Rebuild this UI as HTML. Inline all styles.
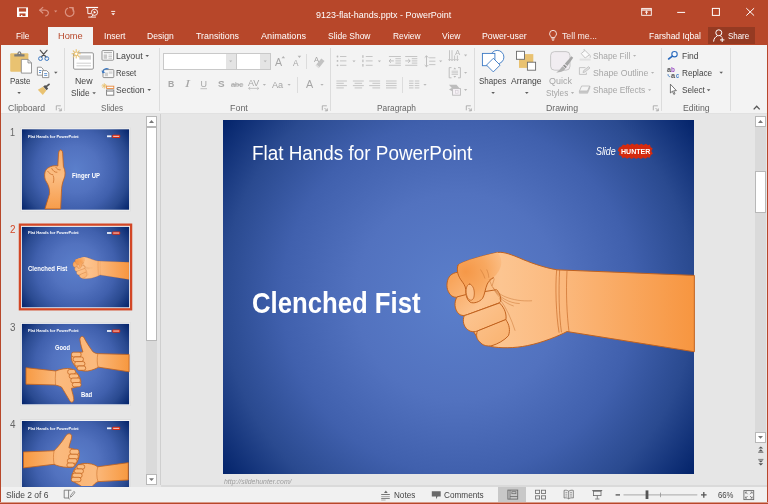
<!DOCTYPE html>
<html lang="en">
<head>
<meta charset="utf-8">
<title>9123-flat-hands.pptx - PowerPoint</title>
<style>
html,body{margin:0;padding:0;}
body{width:768px;height:504px;overflow:hidden;background:#e6e6e6;font-family:"Liberation Sans",Arial,sans-serif;}
#win{position:relative;width:768px;height:504px;overflow:hidden;background:#e6e6e6;}
#win div,#win svg{position:absolute;}
.t{position:absolute;white-space:pre;transform-origin:0 50%;}
#titlebar{left:0;top:0;width:768px;height:45px;background:#b7472a;}
#hometab{left:48px;top:27px;width:45px;height:19px;background:#f3f3f3;}
#share{left:708px;top:27px;width:47px;height:17px;background:#953a22;}
#ribbon{left:1px;top:45px;width:766px;height:68px;background:#f3f3f3;}
#ribline{left:1px;top:113px;width:766px;height:1px;background:#e1e1e1;}
.gsep{width:1px;top:48px;height:63px;background:#dcdcdc;}
.ssep{width:1px;background:#dcdcdc;}
#bl{left:0;top:45px;width:1px;height:459px;background:#b7472a;}
#br{left:767px;top:45px;width:1px;height:459px;background:#b7472a;}
#bb{left:0;top:503px;width:768px;height:1px;background:#b7472a;}#bb2{left:0;top:502px;width:768px;height:1px;background:#d89a89;}
#status{left:1px;top:487px;width:766px;height:16px;background:#f1f1f1;}
#statline{left:161px;top:485px;width:606px;height:2px;background:#dadada;}
#lpdiv{left:160px;top:114px;width:1px;height:371px;background:#cfcfcf;}
.sbbtn{background:#fff;border:1px solid #b8b8b8;box-sizing:border-box;}
.sbtrack{background:#dadada;}
.sbthumb{background:#fff;border:1px solid #b8b8b8;box-sizing:border-box;}
.box{background:#fff;border:1px solid #c9c9c9;box-sizing:border-box;}
.boxbtn{background:#e4e4e4;}
#slide{left:223px;top:120px;width:471px;height:354px;background:radial-gradient(circle farthest-corner at 50% 50%,#5b7fcb 0%,#5272bf 35%,#4060ad 60%,#2a4a90 80%,#03236a 100%);}
.thumb{left:21px;width:109px;height:82px;background:radial-gradient(ellipse 72% 72% at 50% 50%,#5b7eca 0%,#5476c2 20%,#4464b1 50%,#2c4a97 75%,#06266a 100%);outline:1px solid #d0d0d0;}
#viewsel{left:498px;top:487px;width:28px;height:16px;background:#c8c8c8;}
</style>
</head>
<body>
<div id="win">
<div id="titlebar"></div>
<div id="hometab"></div>
<div id="share"></div>
<div id="ribbon"></div>
<div id="ribline"></div>
<div class="gsep" style="left:64px"></div>
<div class="gsep" style="left:159px"></div>
<div class="gsep" style="left:330px"></div>
<div class="gsep" style="left:474px"></div>
<div class="gsep" style="left:661px"></div>
<div class="gsep" style="left:730px"></div>
<div class="ssep" style="left:306px;top:54px;height:15px"></div>
<div class="ssep" style="left:297px;top:77px;height:16px"></div>
<div class="ssep" style="left:402px;top:77px;height:16px"></div>
<div class="box" style="left:163px;top:53px;width:74px;height:17px"></div>
<div class="boxbtn" style="left:226px;top:54px;width:10px;height:15px"></div>
<div class="box" style="left:236px;top:53px;width:35px;height:17px"></div>
<div class="boxbtn" style="left:260px;top:54px;width:10px;height:15px"></div>
<!-- left panel -->
<div id="lpdiv"></div>
<div class="sbtrack" style="left:146px;top:116px;width:11px;height:369px"></div>
<div class="sbbtn" style="left:146px;top:116px;width:11px;height:11px"></div>
<div class="sbthumb" style="left:146px;top:127px;width:11px;height:214px"></div>
<div class="sbbtn" style="left:146px;top:474px;width:11px;height:11px"></div>
<!-- right scrollbar -->
<div class="sbtrack" style="left:755px;top:116px;width:11px;height:326px"></div>
<div class="sbbtn" style="left:755px;top:116px;width:11px;height:11px"></div>
<div class="sbthumb" style="left:755px;top:171px;width:11px;height:42px"></div>
<div class="sbbtn" style="left:755px;top:432px;width:11px;height:11px"></div>
<!-- slide -->
<div id="slide"></div>
<svg width="768" height="504" viewBox="0 0 768 504" style="left:0;top:0">
<defs>
<linearGradient id="skinA" gradientUnits="userSpaceOnUse" x1="90" y1="0" x2="1290" y2="0">
<stop offset="0" stop-color="#f9ae6a"/><stop offset="0.18" stop-color="#fcc591"/><stop offset="0.45" stop-color="#fbb87c"/><stop offset="1" stop-color="#f7953f"/>
</linearGradient>
<linearGradient id="skinF" gradientUnits="userSpaceOnUse" x1="60" y1="150" x2="330" y2="420">
<stop offset="0" stop-color="#f8a55c"/><stop offset="0.5" stop-color="#fcc38e"/><stop offset="1" stop-color="#fab676"/>
</linearGradient>
<radialGradient id="skinT" gradientUnits="userSpaceOnUse" cx="130" cy="110" r="210">
<stop offset="0" stop-color="#f59848"/><stop offset="0.5" stop-color="#f8a860" /><stop offset="1" stop-color="#fcc28c"/>
</radialGradient>
</defs>
<g transform="translate(440 250) scale(0.1984)" stroke="#c0611d" stroke-width="5" stroke-linejoin="round" stroke-linecap="round" fill="none">
<!-- palm + forearm -->
<path fill="url(#skinA)" d="M92,75 C115,58 190,35 290,12 C325,8 370,28 400,40 C450,62 520,88 590,100 L1282,128 L1282,513 L640,411 C600,432 520,466 440,482 C380,495 300,496 255,486 L190,445 L120,330 L85,238 L90,115 Z"/>
<!-- wrist creases -->
<path stroke-width="3" d="M588,102 C580,180 585,330 600,415 M603,103 C597,200 600,330 612,413 M640,108 C634,220 640,330 650,410"/>
<!-- index finger -->
<path fill="url(#skinF)" d="M95,112 C70,112 45,125 38,155 C30,185 38,215 60,232 C75,242 100,240 130,228 L200,200 L180,110 Z"/>
<!-- middle finger -->
<path fill="url(#skinF)" d="M85,238 C70,262 72,300 95,322 C108,333 125,332 140,325 L300,266 C315,250 300,215 285,200 L130,225 Z"/>
<!-- ring finger -->
<path fill="url(#skinF)" d="M122,332 C112,355 118,385 140,402 C155,414 175,414 190,408 L332,352 C336,330 330,295 300,267 L140,325 Z"/>
<!-- pinky -->
<path fill="url(#skinF)" d="M188,410 C180,430 185,450 200,463 C215,482 240,487 262,482 C290,474 325,455 345,432 C355,405 350,375 332,352 Z"/>
<!-- thumb -->
<path fill="url(#skinT)" d="M92,75 C82,95 88,125 105,150 C118,168 128,180 130,200 C128,225 135,250 152,263 C170,272 200,262 215,243 C225,225 228,195 238,172 C245,158 255,148 268,140 C300,110 330,60 290,12 C190,35 115,58 92,75 Z" stroke="none"/>
<path d="M92,75 C82,95 88,125 105,150 C118,168 128,180 130,200 C128,225 135,250 152,263 C170,272 200,262 215,243 C225,225 228,195 238,172 C245,158 255,148 268,140"/>
<!-- nail -->
<path fill="#fbc08a" stroke-width="4" d="M150,172 C168,176 176,205 172,232 C170,248 160,256 150,252 C136,245 130,220 132,198 C134,182 140,172 150,172 Z"/>
<!-- creases -->
<path stroke-width="2.5" stroke="#c87433" d="M268,140 L248,150 L262,182 L272,150 Z"/>
<path stroke-width="2.5" stroke="#c87433" d="M262,182 C285,225 360,262 462,256 M268,190 C295,240 350,268 400,270 M275,205 C300,245 330,268 370,282 M300,245 C335,290 360,350 378,405 M205,100 C215,115 222,128 226,142 M236,100 C242,112 245,125 246,138"/>
</g>
<path fill="#d42a0f" d="M619,147.5 L621.5,146.5 L623,144.5 L625.5,145.3 L627.5,143.8 L630,145 L632,143.6 L634.5,144.8 L637,143.7 L639,145 L641.5,143.8 L643.5,145 L646,143.8 L648,145.3 L650,144.6 L650.5,147 L652.7,148.5 L651.3,151 L652.8,153.5 L650.6,155.5 L650,157.8 L647.5,157.2 L645.5,158.8 L643,157.6 L641,159 L638.5,157.8 L636,159 L634,157.6 L631.5,158.9 L629.5,157.5 L627,158.8 L625,157.3 L622.5,158.3 L621.3,156 L618.6,155 L619.6,152.5 L617.8,150.5 Z"/>
</svg>

<svg width="768" height="504" viewBox="0 0 768 504" style="left:0;top:0">
<defs>
<linearGradient id="skinV" gradientUnits="userSpaceOnUse" x1="0" y1="130" x2="0" y2="500">
<stop offset="0" stop-color="#f9b06c"/><stop offset="0.45" stop-color="#fbbd82"/><stop offset="1" stop-color="#f79b49"/>
</linearGradient>
<linearGradient id="skinL" gradientUnits="userSpaceOnUse" x1="20" y1="0" x2="370" y2="0">
<stop offset="0" stop-color="#f7983f"/><stop offset="0.6" stop-color="#fbba7e"/><stop offset="1" stop-color="#fbb575"/>
</linearGradient>
<linearGradient id="skinR" gradientUnits="userSpaceOnUse" x1="310" y1="0" x2="660" y2="0">
<stop offset="0" stop-color="#fbb575"/><stop offset="0.4" stop-color="#fbba7e"/><stop offset="1" stop-color="#f7983f"/>
</linearGradient>
<radialGradient id="tbg0" gradientUnits="userSpaceOnUse" cx="75.5" cy="169.5" r="67"><stop offset="0" stop-color="#5b7fcb"/><stop offset="0.35" stop-color="#5272bf"/><stop offset="0.6" stop-color="#4060ad"/><stop offset="0.8" stop-color="#2a4a90"/><stop offset="1" stop-color="#03236a"/></radialGradient>
<radialGradient id="tbg1" gradientUnits="userSpaceOnUse" cx="75.5" cy="267.1" r="67"><stop offset="0" stop-color="#5b7fcb"/><stop offset="0.35" stop-color="#5272bf"/><stop offset="0.6" stop-color="#4060ad"/><stop offset="0.8" stop-color="#2a4a90"/><stop offset="1" stop-color="#03236a"/></radialGradient>
<radialGradient id="tbg2" gradientUnits="userSpaceOnUse" cx="75.5" cy="364.1" r="67"><stop offset="0" stop-color="#5b7fcb"/><stop offset="0.35" stop-color="#5272bf"/><stop offset="0.6" stop-color="#4060ad"/><stop offset="0.8" stop-color="#2a4a90"/><stop offset="1" stop-color="#03236a"/></radialGradient>
<radialGradient id="tbg3" gradientUnits="userSpaceOnUse" cx="75.5" cy="461.2" r="67"><stop offset="0" stop-color="#5b7fcb"/><stop offset="0.35" stop-color="#5272bf"/><stop offset="0.6" stop-color="#4060ad"/><stop offset="0.8" stop-color="#2a4a90"/><stop offset="1" stop-color="#03236a"/></radialGradient>

<clipPath id="c2"><rect x="21.9" y="226.9" width="107.2" height="80.4"/></clipPath>
<clipPath id="c4"><rect x="0" y="0" width="672" height="411"/></clipPath>
</defs>
<rect x="20.3" y="127.7" width="110.4" height="83.6" fill="#dadada"/><rect x="20.9" y="128.3" width="109.2" height="82.4" fill="#f4f4f4"/><rect x="21.9" y="129.3" width="107.2" height="80.4" fill="url(#tbg0)"/>
<rect x="19.9" y="224.65" width="111.2" height="84.65" fill="#f4f4f4" stroke="#d24726" stroke-width="2.3"/>
<rect x="21.9" y="226.9" width="107.2" height="80.4" fill="url(#tbg1)"/>
<rect x="20.3" y="322.3" width="110.4" height="83.6" fill="#dadada"/><rect x="20.9" y="322.9" width="109.2" height="82.4" fill="#f4f4f4"/><rect x="21.9" y="323.9" width="107.2" height="80.4" fill="url(#tbg2)"/>
<rect x="20.3" y="419.4" width="110.4" height="83.6" fill="#dadada"/><rect x="20.9" y="420.0" width="109.2" height="82.4" fill="#f4f4f4"/><rect x="21.9" y="421.0" width="107.2" height="80.4" fill="url(#tbg3)"/>
<!-- thumb1 finger up -->
<g transform="translate(20.2 127.7) scale(0.165)" stroke="#c0611d" stroke-width="5" stroke-linejoin="round">
<path fill="url(#skinV)" d="M150,492 L178,400 C180,370 170,345 160,330 C145,310 145,275 155,258 C165,240 200,225 228,232 L232,160 C233,140 240,133 247,135 C256,138 258,150 258,165 L262,235 C275,260 275,290 265,310 C255,335 250,360 250,390 L245,492 Z"/>
<path fill="none" stroke-width="4" d="M165,262 C175,275 185,285 200,285 M190,245 C198,262 210,272 225,270 M215,238 C222,250 232,258 245,255 M200,290 C205,305 205,320 200,335"/>
</g>
<rect x="112.2" y="134.70000000000002" width="8" height="3.4" rx="1" fill="#d62b10"/><rect x="107" y="135.4" width="4.4" height="1.8" fill="#fff" opacity="0.9"/><rect x="113.2" y="135.8" width="6" height="1.1" fill="#fff" opacity="0.75"/>
<!-- thumb2 fist -->
<g clip-path="url(#c2)"><g transform="translate(-28.75 199.61) scale(0.2274)"><g transform="translate(440 250) scale(0.1984)" stroke="#c0611d" stroke-width="5" stroke-linejoin="round" stroke-linecap="round" fill="none">
<!-- palm + forearm -->
<path fill="url(#skinA)" d="M92,75 C115,58 190,35 290,12 C325,8 370,28 400,40 C450,62 520,88 590,100 L1282,128 L1282,513 L640,411 C600,432 520,466 440,482 C380,495 300,496 255,486 L190,445 L120,330 L85,238 L90,115 Z"/>
<!-- wrist creases -->
<path stroke-width="3" d="M588,102 C580,180 585,330 600,415 M603,103 C597,200 600,330 612,413 M640,108 C634,220 640,330 650,410"/>
<!-- index finger -->
<path fill="url(#skinF)" d="M95,112 C70,112 45,125 38,155 C30,185 38,215 60,232 C75,242 100,240 130,228 L200,200 L180,110 Z"/>
<!-- middle finger -->
<path fill="url(#skinF)" d="M85,238 C70,262 72,300 95,322 C108,333 125,332 140,325 L300,266 C315,250 300,215 285,200 L130,225 Z"/>
<!-- ring finger -->
<path fill="url(#skinF)" d="M122,332 C112,355 118,385 140,402 C155,414 175,414 190,408 L332,352 C336,330 330,295 300,267 L140,325 Z"/>
<!-- pinky -->
<path fill="url(#skinF)" d="M188,410 C180,430 185,450 200,463 C215,482 240,487 262,482 C290,474 325,455 345,432 C355,405 350,375 332,352 Z"/>
<!-- thumb -->
<path fill="url(#skinT)" d="M92,75 C82,95 88,125 105,150 C118,168 128,180 130,200 C128,225 135,250 152,263 C170,272 200,262 215,243 C225,225 228,195 238,172 C245,158 255,148 268,140 C300,110 330,60 290,12 C190,35 115,58 92,75 Z" stroke="none"/>
<path d="M92,75 C82,95 88,125 105,150 C118,168 128,180 130,200 C128,225 135,250 152,263 C170,272 200,262 215,243 C225,225 228,195 238,172 C245,158 255,148 268,140"/>
<!-- nail -->
<path fill="#fbc08a" stroke-width="4" d="M150,172 C168,176 176,205 172,232 C170,248 160,256 150,252 C136,245 130,220 132,198 C134,182 140,172 150,172 Z"/>
<!-- creases -->
<path stroke-width="2.5" stroke="#c87433" d="M268,140 L248,150 L262,182 L272,150 Z"/>
<path stroke-width="2.5" stroke="#c87433" d="M262,182 C285,225 360,262 462,256 M268,190 C295,240 350,268 400,270 M275,205 C300,245 330,268 370,282 M300,245 C335,290 360,350 378,405 M205,100 C215,115 222,128 226,142 M236,100 C242,112 245,125 246,138"/>
</g></g></g>
<rect x="112.2" y="231.4" width="8" height="3.4" rx="1" fill="#d62b10"/><rect x="107" y="232.1" width="4.4" height="1.8" fill="#fff" opacity="0.9"/><rect x="113.2" y="232.5" width="6" height="1.1" fill="#fff" opacity="0.75"/>
<!-- thumb3 -->
<g transform="translate(20.2 322.3) scale(0.165)" stroke="#c0611d" stroke-width="5" stroke-linejoin="round">
<path fill="url(#skinR)" d="M660,195 L475,190 C460,190 450,185 440,178 C420,150 400,120 385,90 C375,80 362,88 362,105 C365,135 375,160 380,180 C350,182 320,190 312,205 C305,225 320,250 335,270 C350,290 380,298 410,295 C440,290 460,280 475,272 L660,300 Z"/>
<rect x="311" y="181" width="58" height="29" rx="12" fill="#fbbd82" stroke-width="4.5"/><rect x="321" y="210" width="62" height="28" rx="12" fill="#fbbd82" stroke-width="4.5"/><rect x="330" y="238" width="62" height="27" rx="12" fill="#fbbd82" stroke-width="4.5"/><rect x="345" y="265" width="52" height="26" rx="12" fill="#fbbd82" stroke-width="4.5"/><path fill="none" stroke-width="3" d="M470,192 C465,220 466,250 472,272"/>
<path fill="url(#skinL)" d="M35,275 L215,295 C240,285 280,275 310,282 C340,295 365,330 368,360 C365,385 340,395 310,400 C315,425 325,450 325,470 C322,488 308,488 300,475 C285,450 265,415 250,392 C235,385 222,382 212,380 L35,375 Z"/>
<rect x="288" y="286" width="47" height="29" rx="12" fill="#fbbd82" stroke-width="4.5"/><rect x="297" y="313" width="57" height="27" rx="12" fill="#fbbd82" stroke-width="4.5"/><rect x="307" y="338" width="57" height="29" rx="12" fill="#fbbd82" stroke-width="4.5"/><rect x="316" y="365" width="53" height="26" rx="12" fill="#fbbd82" stroke-width="4.5"/><path fill="none" stroke-width="3" d="M215,296 C212,325 212,355 214,380"/>
</g>
<rect x="112.2" y="329.4" width="8" height="3.4" rx="1" fill="#d62b10"/><rect x="107" y="330.1" width="4.4" height="1.8" fill="#fff" opacity="0.9"/><rect x="113.2" y="330.5" width="6" height="1.1" fill="#fff" opacity="0.75"/>
<!-- thumb4 -->
<g transform="translate(20.2 418.1) scale(0.165)" stroke="#c0611d" stroke-width="5" stroke-linejoin="round" clip-path="url(#c4)">
<path fill="url(#skinL)" d="M20,205 L205,198 C220,185 250,150 275,110 C285,92 305,90 312,105 C315,125 300,150 295,180 C320,185 350,195 358,215 C360,240 345,270 330,290 C310,302 270,300 240,292 C225,288 212,284 205,280 L20,302 Z"/>
<rect x="302" y="189" width="54" height="31" rx="12" fill="#fbbd82" stroke-width="4.5"/><rect x="294" y="219" width="58" height="29" rx="12" fill="#fbbd82" stroke-width="4.5"/><rect x="286" y="246" width="58" height="28" rx="12" fill="#fbbd82" stroke-width="4.5"/><rect x="283" y="272" width="46" height="25" rx="12" fill="#fbbd82" stroke-width="4.5"/><path fill="none" stroke-width="3" d="M205,200 C200,225 200,255 206,280"/>
<path fill="url(#skinR)" d="M655,270 L470,295 C450,280 420,272 380,275 C350,280 330,300 320,330 C305,355 310,380 340,395 C360,405 375,412 380,425 L430,425 C445,400 460,390 472,385 L655,375 Z"/>
<rect x="344" y="282" width="47" height="27" rx="12" fill="#fbbd82" stroke-width="4.5"/><rect x="329" y="308" width="54" height="27" rx="12" fill="#fbbd82" stroke-width="4.5"/><rect x="317" y="334" width="58" height="27" rx="12" fill="#fbbd82" stroke-width="4.5"/><rect x="310" y="359" width="58" height="27" rx="12" fill="#fbbd82" stroke-width="4.5"/><path fill="none" stroke-width="3" d="M470,296 C462,325 462,360 472,385"/>
</g>
<rect x="112.2" y="426.7" width="8" height="3.4" rx="1" fill="#d62b10"/><rect x="107" y="427.40000000000003" width="4.4" height="1.8" fill="#fff" opacity="0.9"/><rect x="113.2" y="427.8" width="6" height="1.1" fill="#fff" opacity="0.75"/>
</svg>
<div id="statline"></div>
<div id="status"></div>
<div id="viewsel"></div>
<div id="bl"></div><div id="br"></div><div id="bb2"></div><div id="bb"></div>
<svg width="768" height="504" viewBox="0 0 768 504" style="left:0;top:0">
<rect x="17" y="7" width="11" height="10" fill="#fff"/>
<rect x="17" y="7" width="11" height="0.7" fill="#b7472a" opacity="0.55"/>
<rect x="18.9" y="8.2" width="7.2" height="3.4" fill="#b7472a"/>
<rect x="19.5" y="13.4" width="6" height="2.7" fill="#b7472a"/>
<rect x="21" y="14.9" width="1.4" height="1.3" fill="#fff"/>
<path d="M39.8,10.2 H45 C48,10.2 49,12.5 48,14.2 C47.4,15.3 46.5,15.8 45.5,16" stroke="#dc9482" stroke-width="1.2" fill="none" stroke-linecap="round"/>
<path d="M42.8,7.4 L39.8,10.2 L42.8,13" stroke="#dc9482" stroke-width="1.2" fill="none" stroke-linecap="round" stroke-linejoin="round"/>
<path d="M54.10,10.60 h3.2 l-1.60,1.8 z" fill="#dc9482"/>
<path d="M72.2,8.6 A4.3,4.3 0 1 1 67.6,8.3" stroke="#dc9482" stroke-width="1.2" fill="none" stroke-linecap="round"/>
<path d="M69.6,7.6 H73.2 V11.2" stroke="#dc9482" stroke-width="1.2" fill="none" stroke-linecap="round" stroke-linejoin="round"/>
<path d="M85.9,7.5 H98.1" stroke="#fff" stroke-width="1.2"/>
<path d="M87.8,7.5 V13.6 H91" stroke="#fff" stroke-width="0.9" fill="none"/>
<circle cx="94.5" cy="12.3" r="3.1" stroke="#fff" stroke-width="0.9" fill="none"/>
<path d="M93.6,10.8 L96.2,12.3 L93.6,13.8 Z" fill="#fff"/>
<path d="M93,15 L91.3,17.1 M88.2,17.1 H96" stroke="#fff" stroke-width="0.9" fill="none"/>
<path d="M111.2,11.4 H115.2" stroke="#fff" stroke-width="0.9"/>
<path d="M111.30,13.25 h3.8 l-1.90,2.1 z" fill="#fff"/>
<path d="M551.3,37.6 C551.2,36.2 549.6,35.6 549.6,33.8 A3.45,3.45 0 0 1 556.5,33.8 C556.5,35.6 554.9,36.2 554.8,37.6 Z" stroke="#fff" stroke-width="0.9" fill="none" opacity="0.92"/>
<path d="M551.5,38.9 H554.6 M552,40.1 H554.1" stroke="#fff" stroke-width="0.9" opacity="0.92"/>
<circle cx="718.8" cy="32.8" r="3" stroke="#fff" stroke-width="1" fill="none"/>
<path d="M713.6,41.6 C713.8,38.5 715.6,36.6 717.3,36 M720.3,36 C721.2,36.4 721.8,36.9 722.3,37.5" stroke="#fff" stroke-width="1" fill="none"/>
<path d="M720,39.9 H724.4 M722.2,37.8 V42" stroke="#fff" stroke-width="1" fill="none"/>
<rect x="641.7" y="8.4" width="9.6" height="6.9" stroke="#fff" stroke-width="0.9" fill="none"/>
<path d="M641.7,10 H651.3" stroke="#fff" stroke-width="1.2"/>
<path d="M646.5,11.2 V14.4 M644.9,12.7 L646.5,11.2 L648.1,12.7" stroke="#fff" stroke-width="0.9" fill="none"/>
<path d="M677.2,12.4 H685.1" stroke="#fff" stroke-width="1"/>
<rect x="712.4" y="8.4" width="7" height="7" stroke="#fff" stroke-width="1" fill="none"/>
<path d="M746.3,8.2 L754.1,15.6 M754.1,8.2 L746.3,15.6" stroke="#fff" stroke-width="1" fill="none"/>
<rect x="10.2" y="53.3" width="18.2" height="18.5" rx="1" fill="#e9c271"/>
<path d="M14.3,56.6 V54.2 H17.3 C17.3,52.6 18.2,51.2 19.4,51.2 C20.6,51.2 21.5,52.6 21.5,54.2 H24.5 V56.6 Z" fill="#7b7b7b"/>
<circle cx="19.4" cy="53.3" r="0.8" fill="#f3f3f3"/>
<path d="M21.3,59.4 H28 L31.5,62.9 V73.1 H21.3 Z" fill="#fff" stroke="#8c8c8c" stroke-width="0.9"/>
<path d="M28,59.4 V62.9 H31.5" fill="none" stroke="#8c8c8c" stroke-width="0.9"/>
<path d="M17.30,92.10 h3.6 l-1.80,2.0 z" fill="#5e5e5e"/>
<path d="M40.3,50.3 L46,57 M47,50.3 L41.3,57" stroke="#555" stroke-width="1.2" fill="none" stroke-linecap="round"/>
<circle cx="40.5" cy="58.6" r="1.9" stroke="#3a78c3" stroke-width="1" fill="none"/>
<circle cx="46.8" cy="58.6" r="1.9" stroke="#3a78c3" stroke-width="1" fill="none"/>
<path d="M37.4,67.2 H41.2 L43.2,69.2 V75.2 H37.4 Z" fill="#fff" stroke="#7d7d7d" stroke-width="0.8"/>
<path d="M42.5,70.6 H46.6 L48.8,72.8 V77.6 H42.5 Z" fill="#fff" stroke="#7d7d7d" stroke-width="0.8"/>
<path d="M39,70.5 H41.5 M39,72.5 H41 M44.2,73.6 H47.2 M44.2,75.4 H47.2" stroke="#3a78c3" stroke-width="0.8"/>
<path d="M54.00,71.80 h3.6 l-1.80,2.0 z" fill="#5e5e5e"/>
<path d="M37.8,89.7 L43,86.8 L46.3,90.6 L42.8,94.9 Z" fill="#e9c271"/>
<path d="M43.2,86.4 L45.2,85 L48.2,88.4 L46.6,90.3 Z" fill="#555"/>
<path d="M46.5,86.4 L49,84.4" stroke="#555" stroke-width="1.8" stroke-linecap="round"/>
<path d="M56.3,110.3 V105.8 H60.8" stroke="#a0a0a0" stroke-width="0.8" fill="none"/>
<path d="M58.5,108.0 L61.3,110.8 M61.3,108.39999999999999 V110.8 H58.9" stroke="#a0a0a0" stroke-width="0.8" fill="none"/>
<rect x="73.6" y="52.8" width="19.8" height="16.4" rx="1.2" fill="#fff" stroke="#8a8a8a" stroke-width="0.9"/>
<rect x="79.3" y="55.4" width="11.7" height="4.2" fill="#d0d0d0"/>
<path d="M76.5,63.2 H91 M76.5,65.8 H91" stroke="#c4c4c4" stroke-width="0.8"/>
<g stroke="#e9c271" stroke-width="1.1" stroke-linecap="round"><path d="M76.2,49.6 V58 M72,53.8 H80.4 M73.2,50.8 L79.2,56.8 M79.2,50.8 L73.2,56.8"/></g>
<circle cx="76.2" cy="53.8" r="1.7" fill="#fff" stroke="#e9c271" stroke-width="0.9"/>
<path d="M92.30,92.30 h3.6 l-1.80,2.0 z" fill="#5e5e5e"/>
<rect x="102" y="50.6" width="11.6" height="9.6" rx="0.8" fill="#fff" stroke="#858585" stroke-width="0.9"/>
<path d="M103.8,52.7 H112" stroke="#9a9a9a" stroke-width="0.9"/>
<rect x="103.6" y="54.4" width="3.6" height="4.4" fill="#c9c9c9"/>
<path d="M108.4,55 H112 M108.4,56.6 H112 M108.4,58.2 H112" stroke="#aaa" stroke-width="0.7"/>
<path d="M145.40,54.90 h3.6 l-1.80,2.0 z" fill="#5e5e5e"/>
<rect x="103" y="69.6" width="10.8" height="8" rx="0.8" fill="#f7f7f7" stroke="#858585" stroke-width="0.9"/>
<rect x="104.8" y="72.6" width="3.2" height="3.6" fill="#cfcfcf"/><rect x="108.8" y="71.4" width="3.6" height="2.4" fill="#d6d6d6"/>
<path d="M102.8,72.3 C103,69.6 105.5,68 108.6,69" stroke="#3a78c3" stroke-width="1.2" fill="none"/>
<path d="M101.4,70.6 L102.7,73.4 L105.4,72.2 Z" fill="#3a78c3"/>
<g stroke="#e9c271" stroke-width="0.9" stroke-linecap="round"><path d="M104.3,83.6 V88.2 M102,85.9 H106.6 M102.7,84.3 L105.9,87.5 M105.9,84.3 L102.7,87.5"/></g>
<rect x="106.6" y="86.2" width="7.2" height="2.2" fill="#fff" stroke="#e8873a" stroke-width="0.9"/>
<rect x="106.6" y="90" width="7.2" height="5.2" fill="#fff" stroke="#777" stroke-width="0.9"/>
<path d="M106.6,91.4 H113.8" stroke="#999" stroke-width="0.8"/>
<path d="M147.40,89.10 h3.6 l-1.80,2.0 z" fill="#5e5e5e"/>
<path d="M229.10,60.50 h3.2 l-1.60,1.8 z" fill="#b8b8b8"/>
<path d="M263.60,60.50 h3.2 l-1.60,1.8 z" fill="#b8b8b8"/>
<path d="M281.5,58.2 L283.3,55.9 L285.1,58.2 Z" fill="#b3b3b3"/>
<path d="M297.6,55.8 H301.2 L299.4,58.1 Z" fill="#b3b3b3"/>
<path d="M316.3,64.6 L321.3,58.4 L324.5,61 L319.5,67.2 Z" fill="#c2c2c2"/>
<path d="M316.3,64.6 L319.5,67.2 L318.6,68.2 L315.4,65.6 Z" fill="#dcdcdc"/>
<path d="M200.50,88.70 H207.00" stroke="#b3b3b3" stroke-width="0.8" fill="none"/>
<path d="M231.00,84.90 H243.30" stroke="#a6a6a6" stroke-width="0.9" fill="none"/>
<path d="M248.6,88.4 H258.8 M250.2,87 L248.6,88.4 L250.2,89.8 M257.2,87 L258.8,88.4 L257.2,89.8" stroke="#b3b3b3" stroke-width="0.7" fill="none"/>
<path d="M262.80,83.90 h3.2 l-1.60,1.8 z" fill="#b3b3b3"/>
<path d="M287.50,83.90 h3.2 l-1.60,1.8 z" fill="#b3b3b3"/>
<path d="M320.40,83.90 h3.2 l-1.60,1.8 z" fill="#b3b3b3"/>
<path d="M322.3,110.3 V105.8 H326.8" stroke="#a0a0a0" stroke-width="0.8" fill="none"/>
<path d="M324.5,108.0 L327.3,110.8 M327.3,108.39999999999999 V110.8 H324.90000000000003" stroke="#a0a0a0" stroke-width="0.8" fill="none"/>
<circle cx="337.5" cy="56.5" r="0.9" fill="#b9b9b9"/>
<path d="M340.00,56.50 H346.40" stroke="#b9b9b9" stroke-width="0.8" fill="none"/>
<rect x="362.3" y="55.2" width="1.2" height="2.6" fill="#b9b9b9"/>
<path d="M365.80,56.50 H372.60" stroke="#b9b9b9" stroke-width="0.8" fill="none"/>
<circle cx="337.5" cy="60.9" r="0.9" fill="#b9b9b9"/>
<path d="M340.00,60.90 H346.40" stroke="#b9b9b9" stroke-width="0.8" fill="none"/>
<rect x="362.3" y="59.6" width="1.2" height="2.6" fill="#b9b9b9"/>
<path d="M365.80,60.90 H372.60" stroke="#b9b9b9" stroke-width="0.8" fill="none"/>
<circle cx="337.5" cy="65.3" r="0.9" fill="#b9b9b9"/>
<path d="M340.00,65.30 H346.40" stroke="#b9b9b9" stroke-width="0.8" fill="none"/>
<rect x="362.3" y="64.0" width="1.2" height="2.6" fill="#b9b9b9"/>
<path d="M365.80,65.30 H372.60" stroke="#b9b9b9" stroke-width="0.8" fill="none"/>
<path d="M352.40,60.40 h3.2 l-1.60,1.8 z" fill="#b9b9b9"/>
<path d="M377.80,60.40 h3.2 l-1.60,1.8 z" fill="#b9b9b9"/>
<path d="M388.90,56.50 H400.90" stroke="#b9b9b9" stroke-width="0.8" fill="none"/>
<path d="M388.90,65.30 H400.90" stroke="#b9b9b9" stroke-width="0.8" fill="none"/>
<path d="M395.40,58.70 H400.90" stroke="#b9b9b9" stroke-width="0.8" fill="none"/>
<path d="M395.40,60.90 H400.90" stroke="#b9b9b9" stroke-width="0.8" fill="none"/>
<path d="M395.40,63.10 H400.90" stroke="#b9b9b9" stroke-width="0.8" fill="none"/>
<path d="M389,60.9 H393.8 M391,59 L389,60.9 L391,62.8" stroke="#b9b9b9" stroke-width="0.9" fill="none"/>
<path d="M405.20,56.50 H417.30" stroke="#b9b9b9" stroke-width="0.8" fill="none"/>
<path d="M405.20,65.30 H417.30" stroke="#b9b9b9" stroke-width="0.8" fill="none"/>
<path d="M411.80,58.70 H417.30" stroke="#b9b9b9" stroke-width="0.8" fill="none"/>
<path d="M411.80,60.90 H417.30" stroke="#b9b9b9" stroke-width="0.8" fill="none"/>
<path d="M411.80,63.10 H417.30" stroke="#b9b9b9" stroke-width="0.8" fill="none"/>
<path d="M405.3,60.9 H410.2 M408.2,59 L410.2,60.9 L408.2,62.8" stroke="#b9b9b9" stroke-width="0.9" fill="none"/>
<path d="M426.5,55.8 V66.8 M424.7,57.6 L426.5,55.8 L428.3,57.6 M424.7,65 L426.5,66.8 L428.3,65" stroke="#b9b9b9" stroke-width="0.9" fill="none"/>
<path d="M429.20,57.80 H435.40" stroke="#b9b9b9" stroke-width="0.8" fill="none"/>
<path d="M429.20,61.20 H435.40" stroke="#b9b9b9" stroke-width="0.8" fill="none"/>
<path d="M429.20,64.60 H435.40" stroke="#b9b9b9" stroke-width="0.8" fill="none"/>
<path d="M439.10,60.40 h3.2 l-1.60,1.8 z" fill="#b9b9b9"/>
<path d="M336.40,81.00 H346.90" stroke="#b9b9b9" stroke-width="0.8" fill="none"/>
<path d="M352.90,81.00 H363.80" stroke="#b9b9b9" stroke-width="0.8" fill="none"/>
<path d="M369.20,81.00 H380.10" stroke="#b9b9b9" stroke-width="0.8" fill="none"/>
<path d="M386.00,81.00 H396.60" stroke="#b9b9b9" stroke-width="0.8" fill="none"/>
<path d="M336.40,83.30 H343.80" stroke="#b9b9b9" stroke-width="0.8" fill="none"/>
<path d="M354.60,83.30 H362.10" stroke="#b9b9b9" stroke-width="0.8" fill="none"/>
<path d="M372.40,83.30 H380.10" stroke="#b9b9b9" stroke-width="0.8" fill="none"/>
<path d="M386.00,83.30 H396.60" stroke="#b9b9b9" stroke-width="0.8" fill="none"/>
<path d="M336.40,85.60 H346.90" stroke="#b9b9b9" stroke-width="0.8" fill="none"/>
<path d="M352.90,85.60 H363.80" stroke="#b9b9b9" stroke-width="0.8" fill="none"/>
<path d="M369.20,85.60 H380.10" stroke="#b9b9b9" stroke-width="0.8" fill="none"/>
<path d="M386.00,85.60 H396.60" stroke="#b9b9b9" stroke-width="0.8" fill="none"/>
<path d="M336.40,87.90 H343.80" stroke="#b9b9b9" stroke-width="0.8" fill="none"/>
<path d="M354.60,87.90 H362.10" stroke="#b9b9b9" stroke-width="0.8" fill="none"/>
<path d="M372.40,87.90 H380.10" stroke="#b9b9b9" stroke-width="0.8" fill="none"/>
<path d="M386.00,87.90 H396.60" stroke="#b9b9b9" stroke-width="0.8" fill="none"/>
<path d="M409.00,81.00 H413.50" stroke="#b9b9b9" stroke-width="0.8" fill="none"/>
<path d="M414.80,81.00 H419.30" stroke="#b9b9b9" stroke-width="0.8" fill="none"/>
<path d="M409.00,83.30 H413.50" stroke="#b9b9b9" stroke-width="0.8" fill="none"/>
<path d="M414.80,83.30 H419.30" stroke="#b9b9b9" stroke-width="0.8" fill="none"/>
<path d="M409.00,85.60 H413.50" stroke="#b9b9b9" stroke-width="0.8" fill="none"/>
<path d="M414.80,85.60 H419.30" stroke="#b9b9b9" stroke-width="0.8" fill="none"/>
<path d="M409.00,87.90 H413.50" stroke="#b9b9b9" stroke-width="0.8" fill="none"/>
<path d="M414.80,87.90 H419.30" stroke="#b9b9b9" stroke-width="0.8" fill="none"/>
<path d="M423.40,83.90 h3.2 l-1.60,1.8 z" fill="#b9b9b9"/>
<path d="M449.5,50.2 V60.4 M452,50.2 V60.4 M454.6,55.5 V60.4 M457.4,55.5 V60.4" stroke="#b9b9b9" stroke-width="0.8" fill="none"/>
<path d="M448.4,59.2 L449.5,60.8 L450.6,59.2 M450.9,59.2 L452,60.8 L453.1,59.2 M453.5,59.2 L454.6,60.8 L455.7,59.2 M456.3,59.2 L457.4,60.8 L458.5,59.2" stroke="#b9b9b9" stroke-width="0.7" fill="none"/>
<path d="M464.00,54.60 h3.2 l-1.60,1.8 z" fill="#b9b9b9"/>
<path d="M451.5,67.6 H449.2 V77.8 H451.5 M458,67.6 H460.4 V77.8 H458" stroke="#b9b9b9" stroke-width="0.9" fill="none"/>
<path d="M451.6,71.2 H458 M451.6,72.8 H458 M451.6,74.4 H458" stroke="#b9b9b9" stroke-width="0.7"/>
<path d="M453.4,69.3 L454.8,67.6 L456.2,69.3 Z M453.4,76.1 L454.8,77.8 L456.2,76.1 Z" fill="#b9b9b9"/>
<path d="M464.00,71.90 h3.2 l-1.60,1.8 z" fill="#b9b9b9"/>
<path d="M449,84.8 H456.5 L459.5,88.3 H452 Z" fill="#bdbdbd"/>
<path d="M449,89.4 L452.6,87.4 V91.4 Z" fill="#bdbdbd"/>
<rect x="452.6" y="88.6" width="7.8" height="6.6" fill="#f6f2f6" stroke="#b9b9b9" stroke-width="0.9"/>
<rect x="455.3" y="90.6" width="2.8" height="2.6" fill="none" stroke="#d2cbd2" stroke-width="0.6"/>
<path d="M464.00,89.10 h3.2 l-1.60,1.8 z" fill="#b9b9b9"/>
<path d="M466.3,110.3 V105.8 H470.8" stroke="#a0a0a0" stroke-width="0.8" fill="none"/>
<path d="M468.5,108.0 L471.3,110.8 M471.3,108.39999999999999 V110.8 H468.90000000000003" stroke="#a0a0a0" stroke-width="0.8" fill="none"/>
<circle cx="497.2" cy="57.1" r="6.7" fill="#fff" stroke="#3a78c3" stroke-width="0.9"/>
<rect x="482.4" y="53.4" width="12.5" height="12.3" fill="#fff" stroke="#3a78c3" stroke-width="0.9"/>
<path d="M493.3,58.3 L500.1,65.1 L493.3,71.9 L486.5,65.1 Z" fill="#fff" stroke="#3a78c3" stroke-width="0.9"/>
<path d="M491.30,92.00 h3.6 l-1.80,2.0 z" fill="#5e5e5e"/>
<rect x="519" y="54.1" width="14.3" height="13.8" fill="#e9c271"/>
<rect x="516.5" y="51.3" width="8" height="8" fill="#fff" stroke="#6a6a6a" stroke-width="0.9"/>
<rect x="527.4" y="62.2" width="8.2" height="8" fill="#fff" stroke="#6a6a6a" stroke-width="0.9"/>
<path d="M525.00,92.00 h3.6 l-1.80,2.0 z" fill="#5e5e5e"/>
<rect x="550.6" y="51.6" width="19.4" height="18.6" rx="4" fill="#f1edf1" stroke="#c2c2c2" stroke-width="0.9"/>
<path d="M571.4,56.2 L573.2,57.8 L567.4,66 L564.8,63.8 Z" fill="#a6a6a6"/>
<path d="M564.2,64.6 L566.8,66.8 L565.8,68.2 L563,65.8 Z" fill="#8f8f8f"/>
<path d="M562.6,66.2 L565.4,68.6 C564.4,71 560.6,72.8 556.2,72.4 C559.6,70.8 560.4,68.2 562.6,66.2 Z" fill="#b2b2b2"/>
<path d="M570.90,92.10 h3.2 l-1.60,1.8 z" fill="#b3b3b3"/>
<path d="M581.2,53.6 L585,50.4 L589.4,54.8 L585.2,58 Z" fill="#fbfbfb" stroke="#b9b9b9" stroke-width="0.8"/>
<path d="M589.4,54.8 C590.6,55.8 590.6,57 590,57.8" stroke="#b9b9b9" stroke-width="0.8" fill="none"/>
<path d="M583.4,50.2 C583.6,49.2 584.8,49.2 585,50.4" stroke="#b9b9b9" stroke-width="0.7" fill="none"/>
<rect x="579.6" y="58.6" width="11" height="2" fill="#e2e2e2"/>
<path d="M633.00,55.00 h3.2 l-1.60,1.8 z" fill="#b3b3b3"/>
<path d="M585.4,67.6 H579.4 V74.4 H586.4 V72.6" stroke="#b9b9b9" stroke-width="0.8" fill="none"/>
<path d="M583,72.6 L583.6,70.6 L588.6,66.6 L590,68 L585,72 Z" fill="#e0e0e0" stroke="#b9b9b9" stroke-width="0.7"/>
<path d="M651.00,72.00 h3.2 l-1.60,1.8 z" fill="#b3b3b3"/>
<path d="M579.4,91.2 L581.6,86 H589.8 L587.6,91.2 Z" fill="#f4f4f4" stroke="#b9b9b9" stroke-width="0.8"/>
<path d="M579.4,91.2 V93.2 H587.6 L589.8,88 V86 L587.6,91.2 Z" fill="#c9c9c9" stroke="#b9b9b9" stroke-width="0.6"/>
<path d="M648.00,89.20 h3.2 l-1.60,1.8 z" fill="#b3b3b3"/>
<path d="M653.3,110.3 V105.8 H657.8" stroke="#a0a0a0" stroke-width="0.8" fill="none"/>
<path d="M655.5,108.0 L658.3,110.8 M658.3,108.39999999999999 V110.8 H655.9" stroke="#a0a0a0" stroke-width="0.8" fill="none"/>
<circle cx="674.5" cy="54.2" r="2.7" stroke="#2b6bbd" stroke-width="1.1" fill="#f7fbff"/>
<path d="M672.4,56.2 L668.6,59" stroke="#2b6bbd" stroke-width="1.6" stroke-linecap="round"/>
<path d="M668,74.2 C668,76 669,76.8 670.2,76.6" stroke="#3a78c3" stroke-width="0.9" fill="none"/>
<path d="M719.40,71.80 h3.6 l-1.80,2.0 z" fill="#5e5e5e"/>
<path d="M670.4,84.2 V93 L672.4,91.2 L673.8,94.4 L675,93.8 L673.6,90.8 L676.4,90.6 Z" fill="#fff" stroke="#555" stroke-width="0.8" stroke-linejoin="round"/>
<path d="M706.80,89.30 h3.6 l-1.80,2.0 z" fill="#5e5e5e"/>
<path d="M753.7,109.4 L756.7,106.2 L759.7,109.4" stroke="#555" stroke-width="1.3" fill="none"/>
<path d="M149.0,122.9 L151.5,120.1 L154.0,122.9 Z" fill="#777"/>
<path d="M149.0,478.20000000000005 L151.5,481.0 L154.0,478.20000000000005 Z" fill="#777"/>
<path d="M758.0,122.9 L760.5,120.1 L763.0,122.9 Z" fill="#777"/>
<path d="M758.0,436.0 L760.5,438.79999999999995 L763.0,436.0 Z" fill="#777"/>
<path d="M758.4,448.6 L760.8,446.4 L763.2,448.6 Z M758.4,451.4 L760.8,449.2 L763.2,451.4 Z" fill="#555"/><path d="M758.2,452.4 H763.4" stroke="#555" stroke-width="0.7"/>
<path d="M758.4,460.4 L760.8,462.6 L763.2,460.4 Z M758.4,463.2 L760.8,465.4 L763.2,463.2 Z" fill="#555"/><path d="M758.2,459.4 H763.4" stroke="#555" stroke-width="0.7"/>
<path d="M64.2,490.2 H68.6 V498 H64.2 Z M68.6,490.2 H71.4" stroke="#6a6a6a" stroke-width="0.8" fill="none"/>
<path d="M68.6,498 L69.6,499.4" stroke="#6a6a6a" stroke-width="0.8" fill="none"/>
<path d="M70.4,497.2 L70.8,495.2 L73.8,491.4 L75,492.4 L72,496.2 Z" stroke="#6a6a6a" stroke-width="0.7" fill="#f3f3f3"/>
<path d="M384,493.1 L385.85,490.6 L387.7,493.1 Z" fill="#6a6a6a"/>
<path d="M381.2,494.5 H389.8 M381.2,498.4 H389.8" stroke="#6a6a6a" stroke-width="0.9"/>
<path d="M381.2,496.5 H389.8 M381.2,500 H385.6" stroke="#a0a0a0" stroke-width="0.8"/>
<path d="M431.8,491.2 H440.7 V496.6 H437.6 L436,499.2 V496.6 H431.8 Z" fill="#6a6a6a"/>
<rect x="507.9" y="490.1" width="9.8" height="9" fill="none" stroke="#6a6a6a" stroke-width="0.9"/>
<path d="M510,490.1 V499.1 M510,496.5 H517.7" stroke="#6a6a6a" stroke-width="0.8" fill="none"/>
<rect x="511.9" y="491.7" width="4" height="2" fill="none" stroke="#6a6a6a" stroke-width="0.7"/>
<rect x="535.4" y="490.2" width="4.2" height="3.2" fill="none" stroke="#6a6a6a" stroke-width="0.8"/>
<rect x="541.4" y="490.2" width="4.2" height="3.2" fill="none" stroke="#6a6a6a" stroke-width="0.8"/>
<rect x="535.4" y="495.8" width="4.2" height="3.2" fill="none" stroke="#6a6a6a" stroke-width="0.8"/>
<rect x="541.4" y="495.8" width="4.2" height="3.2" fill="none" stroke="#6a6a6a" stroke-width="0.8"/>
<path d="M568.7,491.2 C567.4,490.2 565.6,490 564.1,490.4 V498 C565.6,497.6 567.4,497.8 568.7,498.8 C570,497.8 571.8,497.6 573.3,498 V490.4 C571.8,490 570,490.2 568.7,491.2 Z M568.7,491.2 V498.8" stroke="#6a6a6a" stroke-width="0.8" fill="none"/>
<path d="M565.4,492.4 H567.4 M565.4,494.2 H567.4 M565.4,496 H567.4 M570,492.4 H572 M570,494.2 H572 M570,496 H572" stroke="#6a6a6a" stroke-width="0.6"/>
<path d="M592.3,490.6 H602.2" stroke="#6a6a6a" stroke-width="1.1"/>
<rect x="593.6" y="491.2" width="7.4" height="4.4" fill="none" stroke="#6a6a6a" stroke-width="0.8"/>
<path d="M597.3,495.6 V498.8 M595.2,499 H599.4" stroke="#6a6a6a" stroke-width="0.8"/>
<path d="M615.6,494.9 H620" stroke="#555" stroke-width="1.3"/>
<path d="M623.5,494.9 H697.3" stroke="#8a8a8a" stroke-width="0.7"/>
<path d="M660.5,492.6 V497.2" stroke="#8a8a8a" stroke-width="0.7"/>
<rect x="645.6" y="490.4" width="2.8" height="8.6" fill="#555"/>
<path d="M701,494.9 H706.6 M703.8,492.1 V497.7" stroke="#555" stroke-width="1.3"/>
<rect x="743.9" y="490.6" width="9.8" height="9" fill="none" stroke="#6a6a6a" stroke-width="0.9"/>
<path d="M745.6,492.2 L747.6,494.2 M752,492.2 L750,494.2 M745.6,498 L747.6,496 M752,498 L750,496" stroke="#6a6a6a" stroke-width="0.8"/>
<path d="M745.4,493.6 V492 H747 M750.6,492 H752.2 V493.6 M745.4,496.6 V498.2 H747 M750.6,498.2 H752.2 V496.6" stroke="#6a6a6a" stroke-width="0.7" fill="none"/>
</svg>
<div id="txt" style="left:0;top:0;width:768px;height:504px;will-change:transform">
<span class="t" style="left:315.7px;top:10px;font-size:9px;line-height:11px;color:#fff;transform:scaleX(0.994);">9123-flat-hands.pptx - PowerPoint</span>
<span class="t" style="left:15.8px;top:31px;font-size:9px;line-height:11px;color:#fff;transform:scaleX(0.923);">File</span>
<span class="t" style="left:57.5px;top:31px;font-size:9px;line-height:11px;color:#b7472a;transform:scaleX(1.028);">Home</span>
<span class="t" style="left:103.7px;top:31px;font-size:9px;line-height:11px;color:#fff;transform:scaleX(0.955);">Insert</span>
<span class="t" style="left:147.3px;top:31px;font-size:9px;line-height:11px;color:#fff;transform:scaleX(0.953);">Design</span>
<span class="t" style="left:196.0px;top:31px;font-size:9px;line-height:11px;color:#fff;transform:scaleX(0.984);">Transitions</span>
<span class="t" style="left:261.3px;top:31px;font-size:9px;line-height:11px;color:#fff;transform:scaleX(1.011);">Animations</span>
<span class="t" style="left:328.3px;top:31px;font-size:9px;line-height:11px;color:#fff;transform:scaleX(0.944);">Slide Show</span>
<span class="t" style="left:392.6px;top:31px;font-size:9px;line-height:11px;color:#fff;transform:scaleX(0.932);">Review</span>
<span class="t" style="left:442.0px;top:31px;font-size:9px;line-height:11px;color:#fff;transform:scaleX(0.945);">View</span>
<span class="t" style="left:482.3px;top:31px;font-size:9px;line-height:11px;color:#fff;transform:scaleX(0.971);">Power-user</span>
<span class="t" style="left:562.0px;top:31px;font-size:9px;line-height:11px;color:#fff;opacity:0.9;transform:scaleX(0.972);">Tell me...</span>
<span class="t" style="left:648.5px;top:31px;font-size:9px;line-height:11px;color:#fff;transform:scaleX(0.941);">Farshad Iqbal</span>
<span class="t" style="left:727.8px;top:31px;font-size:9px;line-height:11px;color:#fff;transform:scaleX(0.882);">Share</span>
<span class="t" style="left:9.6px;top:76px;font-size:9px;line-height:11px;color:#444;transform:scaleX(0.891);">Paste</span>
<span class="t" style="left:8.0px;top:103px;font-size:9px;line-height:11px;color:#666;transform:scaleX(0.960);">Clipboard</span>
<span class="t" style="left:75.1px;top:76px;font-size:9px;line-height:11px;color:#444;transform:scaleX(0.977);">New</span>
<span class="t" style="left:71.3px;top:88px;font-size:9px;line-height:11px;color:#444;transform:scaleX(0.929);">Slide</span>
<span class="t" style="left:116.3px;top:51px;font-size:9px;line-height:11px;color:#444;transform:scaleX(0.988);">Layout</span>
<span class="t" style="left:116.3px;top:68px;font-size:9px;line-height:11px;color:#444;transform:scaleX(0.859);">Reset</span>
<span class="t" style="left:116.3px;top:85px;font-size:9px;line-height:11px;color:#444;transform:scaleX(0.946);">Section</span>
<span class="t" style="left:101.0px;top:103px;font-size:9px;line-height:11px;color:#666;transform:scaleX(0.897);">Slides</span>
<span class="t" style="left:229.7px;top:103px;font-size:9px;line-height:11px;color:#666;transform:scaleX(0.988);">Font</span>
<span class="t" style="left:376.7px;top:103px;font-size:9px;line-height:11px;color:#666;transform:scaleX(0.928);">Paragraph</span>
<span class="t" style="left:479.4px;top:76px;font-size:9px;line-height:11px;color:#444;transform:scaleX(0.891);">Shapes</span>
<span class="t" style="left:511.2px;top:76px;font-size:9px;line-height:11px;color:#444;transform:scaleX(0.952);">Arrange</span>
<span class="t" style="left:549.2px;top:76px;font-size:9px;line-height:11px;color:#a6a6a6;transform:scaleX(0.995);">Quick</span>
<span class="t" style="left:546.2px;top:88px;font-size:9px;line-height:11px;color:#a6a6a6;transform:scaleX(0.906);">Styles</span>
<span class="t" style="left:545.7px;top:103px;font-size:9px;line-height:11px;color:#666;transform:scaleX(0.972);">Drawing</span>
<span class="t" style="left:593.0px;top:51px;font-size:9px;line-height:11px;color:#a6a6a6;transform:scaleX(0.932);">Shape Fill</span>
<span class="t" style="left:593.0px;top:68px;font-size:9px;line-height:11px;color:#a6a6a6;transform:scaleX(0.969);">Shape Outline</span>
<span class="t" style="left:593.0px;top:85px;font-size:9px;line-height:11px;color:#a6a6a6;transform:scaleX(0.936);">Shape Effects</span>
<span class="t" style="left:681.8px;top:51px;font-size:9px;line-height:11px;color:#444;transform:scaleX(0.942);">Find</span>
<span class="t" style="left:681.8px;top:68px;font-size:9px;line-height:11px;color:#444;transform:scaleX(0.914);">Replace</span>
<span class="t" style="left:681.8px;top:85px;font-size:9px;line-height:11px;color:#444;transform:scaleX(0.915);">Select</span>
<span class="t" style="left:682.5px;top:103px;font-size:9px;line-height:11px;color:#666;transform:scaleX(0.970);">Editing</span>
<span class="t" style="left:666.9px;top:65px;font-size:7.5px;line-height:9px;color:#555;font-weight:bold;transform:scaleX(0.959);">a</span>
<span class="t" style="left:671.3px;top:65px;font-size:7.5px;line-height:9px;color:#9a4fc4;font-weight:bold;transform:scaleX(0.849);">b</span>
<span class="t" style="left:671.1px;top:71px;font-size:7.5px;line-height:9px;color:#555;font-weight:bold;transform:scaleX(0.983);">a</span>
<span class="t" style="left:675.9px;top:71px;font-size:7.5px;line-height:9px;color:#3a78c3;font-weight:bold;transform:scaleX(0.743);">c</span>
<span class="t" style="left:167.6px;top:79px;font-size:9px;line-height:11px;color:#a6a6a6;font-weight:bold;transform:scaleX(0.969);">B</span>
<span class="t" style="left:184.8px;top:78px;font-size:10px;line-height:12px;color:#a6a6a6;font-style:italic;font-family:'Liberation Serif',serif;transform:scaleX(1.495);">I</span>
<span class="t" style="left:200.5px;top:79px;font-size:9px;line-height:11px;color:#a6a6a6;">U</span>
<span class="t" style="left:217.6px;top:79px;font-size:9px;line-height:11px;color:#a6a6a6;font-weight:bold;transform:scaleX(1.097);">S</span>
<span class="t" style="left:231.2px;top:80px;font-size:7.5px;line-height:9px;color:#a6a6a6;transform:scaleX(0.984);">abc</span>
<span class="t" style="left:247.9px;top:79px;font-size:8.2px;line-height:10px;color:#a6a6a6;transform:scaleX(1.094);">AV</span>
<span class="t" style="left:272.4px;top:79px;font-size:9.3px;line-height:12px;color:#a6a6a6;transform:scaleX(0.985);">Aa</span>
<span class="t" style="left:275.3px;top:56px;font-size:10.5px;line-height:13px;color:#a6a6a6;transform:scaleX(1.012);">A</span>
<span class="t" style="left:292.8px;top:59px;font-size:8.2px;line-height:10px;color:#a6a6a6;transform:scaleX(1.006);">A</span>
<span class="t" style="left:313.9px;top:55px;font-size:8px;line-height:10px;color:#a6a6a6;transform:scaleX(0.936);">A</span>
<span class="t" style="left:306.1px;top:78px;font-size:10.5px;line-height:13px;color:#a6a6a6;transform:scaleX(1.026);">A</span>
<span class="t" style="left:454.6px;top:48px;font-size:7.5px;line-height:9px;color:#b9b9b9;transform:scaleX(1.037);">A</span>
<span class="t" style="left:6.0px;top:490px;font-size:9px;line-height:11px;color:#444;transform:scaleX(0.944);">Slide 2 of 6</span>
<span class="t" style="left:393.8px;top:490px;font-size:9px;line-height:11px;color:#444;transform:scaleX(0.902);">Notes</span>
<span class="t" style="left:443.8px;top:490px;font-size:9px;line-height:11px;color:#444;transform:scaleX(0.912);">Comments</span>
<span class="t" style="left:718.0px;top:490px;font-size:9px;line-height:11px;color:#444;transform:scaleX(0.860);">66%</span>
<span class="t" style="left:10.3px;top:127px;font-size:10px;line-height:12px;color:#666;transform:scaleX(0.899);">1</span>
<span class="t" style="left:9.8px;top:224px;font-size:10px;line-height:12px;color:#d24726;transform:scaleX(0.989);">2</span>
<span class="t" style="left:9.8px;top:322px;font-size:10px;line-height:12px;color:#666;transform:scaleX(0.989);">3</span>
<span class="t" style="left:10.3px;top:419px;font-size:10px;line-height:12px;color:#666;transform:scaleX(0.989);">4</span>
<span class="t" style="left:251.6px;top:141px;font-size:19.5px;line-height:24px;color:#fff;transform:scaleX(0.968);">Flat Hands for PowerPoint</span>
<span class="t" style="left:252.4px;top:285px;font-size:30px;line-height:36px;color:#fff;font-weight:bold;transform:scaleX(0.857);">Clenched Fist</span>
<span class="t" style="left:224.0px;top:477px;font-size:7px;line-height:9px;color:#9c9c9c;font-style:italic;transform:scaleX(0.984);">http<i>:</i>//slidehunter.com/</span>
<span class="t" style="left:596.3px;top:146px;font-size:10px;line-height:12px;color:#fff;font-style:italic;transform:scaleX(0.885);">Slide</span>
<span class="t" style="left:620.5px;top:148px;font-size:6.5px;line-height:8px;color:#fff;font-weight:bold;transform:scaleX(1.085);">HUNTER</span>
<span class="t" style="left:28.0px;top:134px;font-size:4.4px;line-height:6px;color:#fff;font-weight:bold;transform:scaleX(0.924);">Flat Hands for PowerPoint</span>
<span class="t" style="left:28.0px;top:230px;font-size:4.4px;line-height:6px;color:#fff;font-weight:bold;transform:scaleX(0.924);">Flat Hands for PowerPoint</span>
<span class="t" style="left:28.0px;top:328px;font-size:4.4px;line-height:6px;color:#fff;font-weight:bold;transform:scaleX(0.924);">Flat Hands for PowerPoint</span>
<span class="t" style="left:28.0px;top:426px;font-size:4.4px;line-height:6px;color:#fff;font-weight:bold;transform:scaleX(0.924);">Flat Hands for PowerPoint</span>
<span class="t" style="left:72.0px;top:171px;font-size:7.4px;line-height:9px;color:#fff;font-weight:bold;transform:scaleX(0.802);">Finger UP</span>
<span class="t" style="left:28.0px;top:264px;font-size:7px;line-height:9px;color:#fff;font-weight:bold;transform:scaleX(0.856);">Clenched Fist</span>
<span class="t" style="left:55.3px;top:343px;font-size:7.4px;line-height:9px;color:#fff;font-weight:bold;transform:scaleX(0.777);">Good</span>
<span class="t" style="left:80.8px;top:390px;font-size:7.4px;line-height:9px;color:#fff;font-weight:bold;transform:scaleX(0.802);">Bad</span>
</div>
</div>
</body>
</html>
